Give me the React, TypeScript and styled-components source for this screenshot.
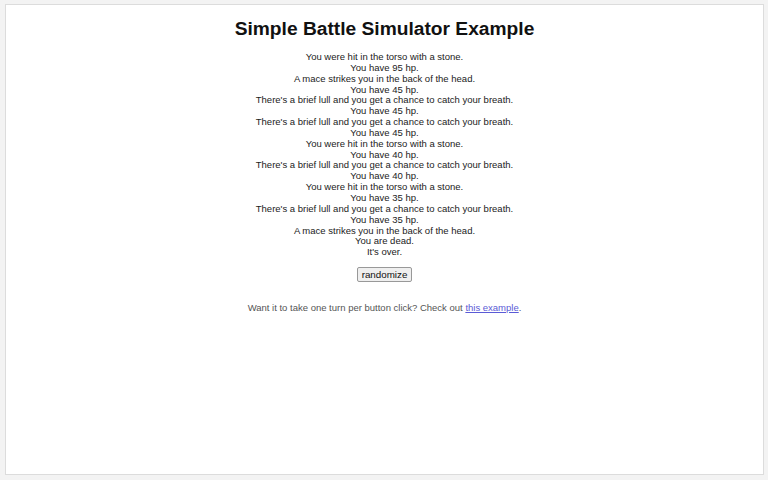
import React from "react";
import styled, { createGlobalStyle } from "styled-components";

const Global = createGlobalStyle`
  html, body { margin: 0; padding: 0; background: #f3f3f3; }
  body { font-family: "Liberation Sans", Arial, sans-serif; }
`;

const Page = styled.div`
  padding: 4px 4px 5px 5px;
  height: 480px;
  box-sizing: border-box;
  display: flex;
`;

const Panel = styled.div`
  flex: 1;
  background: #fff;
  border: 1px solid #dcdcdc;
  display: flex;
  flex-direction: column;
  align-items: center;
  padding-top: 13px;
`;

const Title = styled.h1`
  margin: 0 0 12px;
  font-size: 19.2px;
  line-height: 22px;
  font-weight: bold;
  color: #111;
`;

const Log = styled.div`
  font-size: 9.5px;
  line-height: 10.85px;
  color: #222;
  text-align: center;
`;

const Line = styled.div``;

const Button = styled.button`
  margin-top: 9px;
  font-family: "Liberation Sans", Arial, sans-serif;
  font-size: 9.8px;
  line-height: 12px;
  padding: 0 4px;
  height: 15px;
  background: #efefef;
  border: 1px solid #999;
  border-radius: 2px;
  color: #111;
`;

const Note = styled.p`
  margin: 20px 0 0;
  font-size: 9.5px;
  line-height: 12px;
  color: #555;
`;

const Link = styled.a`
  color: #5b5bd6;
  text-decoration: underline;
`;

const lines = [
  "You were hit in the torso with a stone.",
  "You have 95 hp.",
  "A mace strikes you in the back of the head.",
  "You have 45 hp.",
  "There's a brief lull and you get a chance to catch your breath.",
  "You have 45 hp.",
  "There's a brief lull and you get a chance to catch your breath.",
  "You have 45 hp.",
  "You were hit in the torso with a stone.",
  "You have 40 hp.",
  "There's a brief lull and you get a chance to catch your breath.",
  "You have 40 hp.",
  "You were hit in the torso with a stone.",
  "You have 35 hp.",
  "There's a brief lull and you get a chance to catch your breath.",
  "You have 35 hp.",
  "A mace strikes you in the back of the head.",
  "You are dead.",
  "It's over.",
];

export default function App() {
  return (
    <>
      <Global />
      <Page>
        <Panel>
          <Title>Simple Battle Simulator Example</Title>
          <Log>
            {lines.map((l, i) => (
              <Line key={i}>{l}</Line>
            ))}
          </Log>
          <Button>randomize</Button>
          <Note>
            Want it to take one turn per button click? Check out <Link href="#">this example</Link>.
          </Note>
        </Panel>
      </Page>
    </>
  );
}
